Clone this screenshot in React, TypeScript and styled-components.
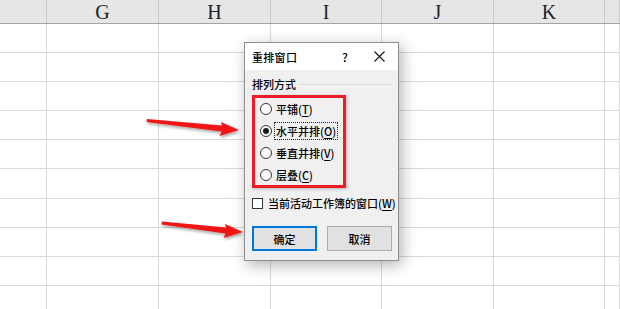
import React from "react";
import styled, { createGlobalStyle } from "styled-components";

const GlobalStyle = createGlobalStyle`
  html, body { margin: 0; padding: 0; background: #fff; overflow: hidden; }
  * { box-sizing: border-box; }
`;

const COLS = "47px 112px 112px 111px 112px 111px 1fr";
const UI_FONT = `"Noto Sans CJK SC", "Noto Sans", sans-serif`;

const Sheet = styled.div`
  position: relative;
  width: 620px;
  height: 309px;
  overflow: hidden;
  background: #fff;
`;

const HeaderRow = styled.div`
  display: grid;
  grid-template-columns: ${COLS};
  height: 24px;
  background: #e6e6e6;
  border-bottom: 1px solid #a3a3a3;
`;

const HeaderCell = styled.div`
  border-right: 1px solid #c8c8c8;
  display: flex;
  align-items: center;
  justify-content: center;
  font-family: "Liberation Serif", serif;
  font-size: 20px;
  color: #1f1f2a;
  line-height: 1;
  padding-top: 1px;
`;

const Row = styled.div`
  display: grid;
  grid-template-columns: ${COLS};
  height: 29.1px;
  border-bottom: 1px solid #d9d9d9;
`;

const Cell = styled.div`
  border-right: 1px solid #d9d9d9;
`;

const Dialog = styled.div`
  position: absolute;
  left: 244px;
  top: 42px;
  width: 155px;
  height: 219px;
  border: 1px solid #8f8f8f;
  background: #f0f0f0;
  box-shadow: 3px 4px 14px rgba(0, 0, 0, 0.3);
  display: flex;
  flex-direction: column;
  font-family: ${UI_FONT};
  font-size: 11px;
  font-weight: 500;
  color: #000;
  & > * { flex-shrink: 0; }
`;

const TitleBar = styled.div`
  height: 27px;
  background: #fff;
  display: flex;
  align-items: center;
  padding-left: 7px;
`;

const Title = styled.div`
  flex: 1;
  font-size: 11px;
  letter-spacing: 0.3px;
`;

const TitleButton = styled.div<{ $w: number }>`
  width: ${(p) => p.$w}px;
  display: flex;
  align-items: center;
  justify-content: center;
  font-size: 12px;
`;

const Body = styled.div`
  flex: 1;
  display: flex;
  flex-direction: column;
  padding: 7px 6px 0 7px;
  & > * { flex-shrink: 0; }
`;

const GroupHead = styled.div`
  display: flex;
  align-items: center;
  height: 14px;
  gap: 4px;
  &::after {
    content: "";
    flex: 1;
    height: 1px;
    background: #dcdcdc;
  }
`;

const RedBox = styled.div`
  margin-top: 4px;
  width: 94px;
  height: 92.5px;
  border: 3px solid #ee1c25;
  display: flex;
  flex-direction: column;
  gap: 3px;
  padding: 1.5px 0 0 5px;
  box-shadow: 1px 1px 3px rgba(0, 0, 0, 0.25);
`;

const RadioRow = styled.div`
  display: flex;
  align-items: center;
  height: 19px;
  gap: 2px;
  flex-shrink: 0;
`;

const RadioCircle = styled.span<{ $on?: boolean }>`
  width: 12px;
  height: 12px;
  border-radius: 50%;
  border: 1px solid #333;
  background: #fff;
  display: flex;
  align-items: center;
  justify-content: center;
  flex-shrink: 0;
  &::after {
    content: "";
    display: ${(p) => (p.$on ? "block" : "none")};
    width: 6px;
    height: 6px;
    border-radius: 50%;
    background: #1a1a1a;
  }
`;

const Label = styled.span<{ $focus?: boolean }>`
  white-space: nowrap;
  padding: 1px 1px;
  border: 1px dotted ${(p) => (p.$focus ? "#222" : "transparent")};
  line-height: 14px;
  u { text-decoration: underline; text-underline-offset: 2px; }
`;

const CheckRow = styled.div`
  display: flex;
  align-items: center;
  gap: 3px;
  margin-top: 7px;
  height: 17px;
`;

const CheckBox = styled.span`
  width: 11px;
  height: 11px;
  border: 1px solid #333;
  background: #fff;
  flex-shrink: 0;
`;

const ButtonRow = styled.div`
  display: flex;
  gap: 10px;
  margin-top: 14.5px;
`;

const Button = styled.div<{ $primary?: boolean }>`
  width: 65px;
  height: 25px;
  display: flex;
  align-items: center;
  justify-content: center;
  background: #e1e1e1;
  border: ${(p) => (p.$primary ? "2px solid #0078d7" : "1px solid #adadad")};
`;

const Overlay = styled.svg`
  position: absolute;
  left: 0;
  top: 0;
  pointer-events: none;
`;

const headers = ["", "G", "H", "I", "J", "K", ""];

export default function App() {
  return (
    <>
      <GlobalStyle />
      <Sheet>
        <HeaderRow>
          {headers.map((h, i) => (
            <HeaderCell key={i}>{h}</HeaderCell>
          ))}
        </HeaderRow>
        {Array.from({ length: 10 }).map((_, r) => (
          <Row key={r}>
            {headers.map((_, c) => (
              <Cell key={c} />
            ))}
          </Row>
        ))}

        <Dialog>
          <TitleBar>
            <Title>重排窗口</Title>
            <TitleButton $w={30}>?</TitleButton>
            <TitleButton $w={38}>
              <svg width="11" height="11" viewBox="0 0 11 11">
                <path d="M0.5 0.5 L10.5 10.5 M10.5 0.5 L0.5 10.5" stroke="#111" strokeWidth="1.1" />
              </svg>
            </TitleButton>
          </TitleBar>
          <Body>
            <GroupHead>排列方式</GroupHead>
            <RedBox>
              <RadioRow>
                <RadioCircle />
                <Label>平铺(<u>T</u>)</Label>
              </RadioRow>
              <RadioRow>
                <RadioCircle $on />
                <Label $focus>水平并排(<u>O</u>)</Label>
              </RadioRow>
              <RadioRow>
                <RadioCircle />
                <Label>垂直并排(<u>V</u>)</Label>
              </RadioRow>
              <RadioRow>
                <RadioCircle />
                <Label>层叠(<u>C</u>)</Label>
              </RadioRow>
            </RedBox>
            <CheckRow>
              <CheckBox />
              <Label>当前活动工作簿的窗口(<u>W</u>)</Label>
            </CheckRow>
            <ButtonRow>
              <Button $primary>确定</Button>
              <Button>取消</Button>
            </ButtonRow>
          </Body>
        </Dialog>

        <Overlay width="620" height="309" viewBox="0 0 620 309">
          <defs>
            <filter id="sh" x="-20%" y="-50%" width="140%" height="200%">
              <feDropShadow dx="1" dy="2" stdDeviation="1.5" floodColor="#000" floodOpacity="0.35" />
            </filter>
          </defs>
          <g filter="url(#sh)" fill="#f01414" stroke="none">
            <path d="M147 119 L222 125.5 L221 122 L239 130 L219.5 136 L221.5 131.5 L146.5 122 Z" />
            <path d="M162 221.5 L226 227.5 L225 224 L243 232 L223.5 238 L225.5 233.5 L161.5 224.5 Z" />
          </g>
        </Overlay>
      </Sheet>
    </>
  );
}
